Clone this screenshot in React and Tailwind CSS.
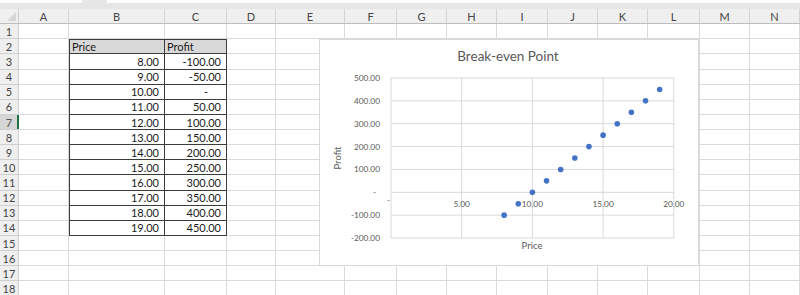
import React from "react";

const COLS = [
  ["A", 50], ["B", 96], ["C", 62], ["D", 49], ["E", 69], ["F", 52], ["G", 50],
  ["H", 50], ["I", 51], ["J", 50], ["K", 50], ["L", 52], ["M", 50], ["N", 50],
];

const DATA = [
  ["8.00", "-100.00"], ["9.00", "-50.00"], ["10.00", "-"], ["11.00", "50.00"],
  ["12.00", "100.00"], ["13.00", "150.00"], ["14.00", "200.00"], ["15.00", "250.00"],
  ["16.00", "300.00"], ["17.00", "350.00"], ["18.00", "400.00"], ["19.00", "450.00"],
];

function Cell({ col, row, w }) {
  const inTable = (col === "B" || col === "C") && row >= 2 && row <= 14;
  let content = null;
  let cls = "border-r border-b border-[#dadada]";
  if (inTable) {
    cls = "border-r border-b border-[#3c3c3c]";
    if (row === 2) {
      cls += " bg-[#d9d9d9] justify-start pl-[2px]";
      content = col === "B" ? "Price" : "Profit";
    } else {
      const d = DATA[row - 3];
      const v = col === "B" ? d[0] : d[1];
      cls += v === "-" ? " justify-end pr-[18px]" : " justify-end pr-[5px]";
      content = v;
    }
    if (col === "B") cls += " border-l";
    if (row === 2) cls += " border-t";
  }
  return (
    <div
      className={`flex items-center shrink-0 h-full text-[11px] text-[#1a1a1a] leading-none ${cls}`}
      style={{ width: w }}
    >
      {content}
    </div>
  );
}

function Chart() {
  const x0 = 391, xs = 14.14, y0 = 192.3, ys = 0.2286;
  const pts = DATA.map((d) => {
    const p = parseFloat(d[0]);
    const pr = 50 * p - 500;
    return [x0 + p * xs, y0 - pr * ys];
  });
  const hLines = [500, 400, 300, 200, 100, 0, -100, -200];
  const vLines = [0, 5, 10, 15, 20];
  const fmt = (v) => (v === 0 ? "-" : v.toFixed(2));
  return (
    <div className="absolute left-[319px] top-[39px] w-[380px] h-[227px] bg-white border border-[#d9d9d9]">
      <svg
        width="378"
        height="225"
        viewBox="320 40 378 225"
        className="block"
        style={{ fontFamily: "Lato, 'Open Sans', sans-serif" }}
      >
        {hLines.map((v) => (
          <line key={"h" + v} x1={x0} x2={674} y1={y0 - v * ys} y2={y0 - v * ys} stroke="#d9d9d9" strokeWidth="1" />
        ))}
        {vLines.map((v) => (
          <line key={"v" + v} x1={x0 + v * xs} x2={x0 + v * xs} y1={77.7} y2={237.7} stroke="#d9d9d9" strokeWidth="1" />
        ))}
        {hLines.map((v) => (
          <text
            key={"yl" + v}
            x={v === 0 ? 376 : 380}
            y={y0 - v * ys + 3}
            textAnchor="end"
            fontSize="8.3"
            fill="#595959"
          >
            {fmt(v)}
          </text>
        ))}
        {vLines.map((v) => (
          <text
            key={"xl" + v}
            x={v === 0 ? 388.5 : x0 + v * xs}
            y={v === 0 ? 203 : 207}
            textAnchor="middle"
            fontSize="8.3"
            fill="#595959"
          >
            {fmt(v)}
          </text>
        ))}
        {pts.map(([x, y], i) => (
          <circle key={i} cx={x} cy={y} r="2.8" fill="#4472c4" />
        ))}
        <text x="508" y="61" textAnchor="middle" fontSize="13.5" fill="#595959">
          Break-even Point
        </text>
        <text x="532" y="249" textAnchor="middle" fontSize="9.5" fill="#595959">
          Price
        </text>
        <text
          x="0"
          y="0"
          textAnchor="middle"
          fontSize="9.5"
          fill="#595959"
          transform="translate(341 158) rotate(-90)"
        >
          Profit
        </text>
      </svg>
    </div>
  );
}

export default function App() {
  const rows = Array.from({ length: 18 }, (_, i) => i + 1);
  return (
    <div
      className="relative w-[800px] h-[295px] overflow-hidden bg-white"
      style={{ fontFamily: "Lato, 'Open Sans', sans-serif" }}
    >
      {/* top strip */}
      <div className="flex h-[9px] bg-[#e6e6e6] items-start gap-[25px]">
        <div className="w-[82px] h-[3px] bg-white" />
        <div className="flex-1 h-[3px] bg-white" />
      </div>
      {/* column headers */}
      <div className="flex h-[15.2px] bg-[#efefef] border-b border-[#bdbdbd]">
        <div className="relative w-[19px] shrink-0 border-r border-[#cfcfcf]">
          <div className="absolute right-[2px] bottom-[2px] w-0 h-0 border-l-[9px] border-l-transparent border-b-[9px] border-b-[#d6d6d6]" />
        </div>
        {COLS.map(([c, w]) => (
          <div
            key={c}
            className="flex items-center justify-center shrink-0 border-r border-[#d4d4d4] text-[11px] text-[#444] leading-none"
            style={{ width: w }}
          >
            {c}
          </div>
        ))}
      </div>
      {/* rows */}
      {rows.map((r) => (
        <div key={r} className="flex h-[15.13px]">
          <div
            className={`relative w-[19px] shrink-0 flex items-center justify-center text-[11px] leading-none border-b border-r border-[#cfcfcf] ${
              r === 7 ? "bg-[#d6d6d6] text-[#555]" : "bg-[#efefef] text-[#444]"
            }`}
          >
            {r}
            {r === 7 && <div className="absolute right-[-1px] top-0 bottom-0 w-[2px] bg-[#217346]" />}
          </div>
          {COLS.map(([c, w]) => (
            <Cell key={c} col={c} row={r} w={w} />
          ))}
        </div>
      ))}
      <Chart />
    </div>
  );
}
